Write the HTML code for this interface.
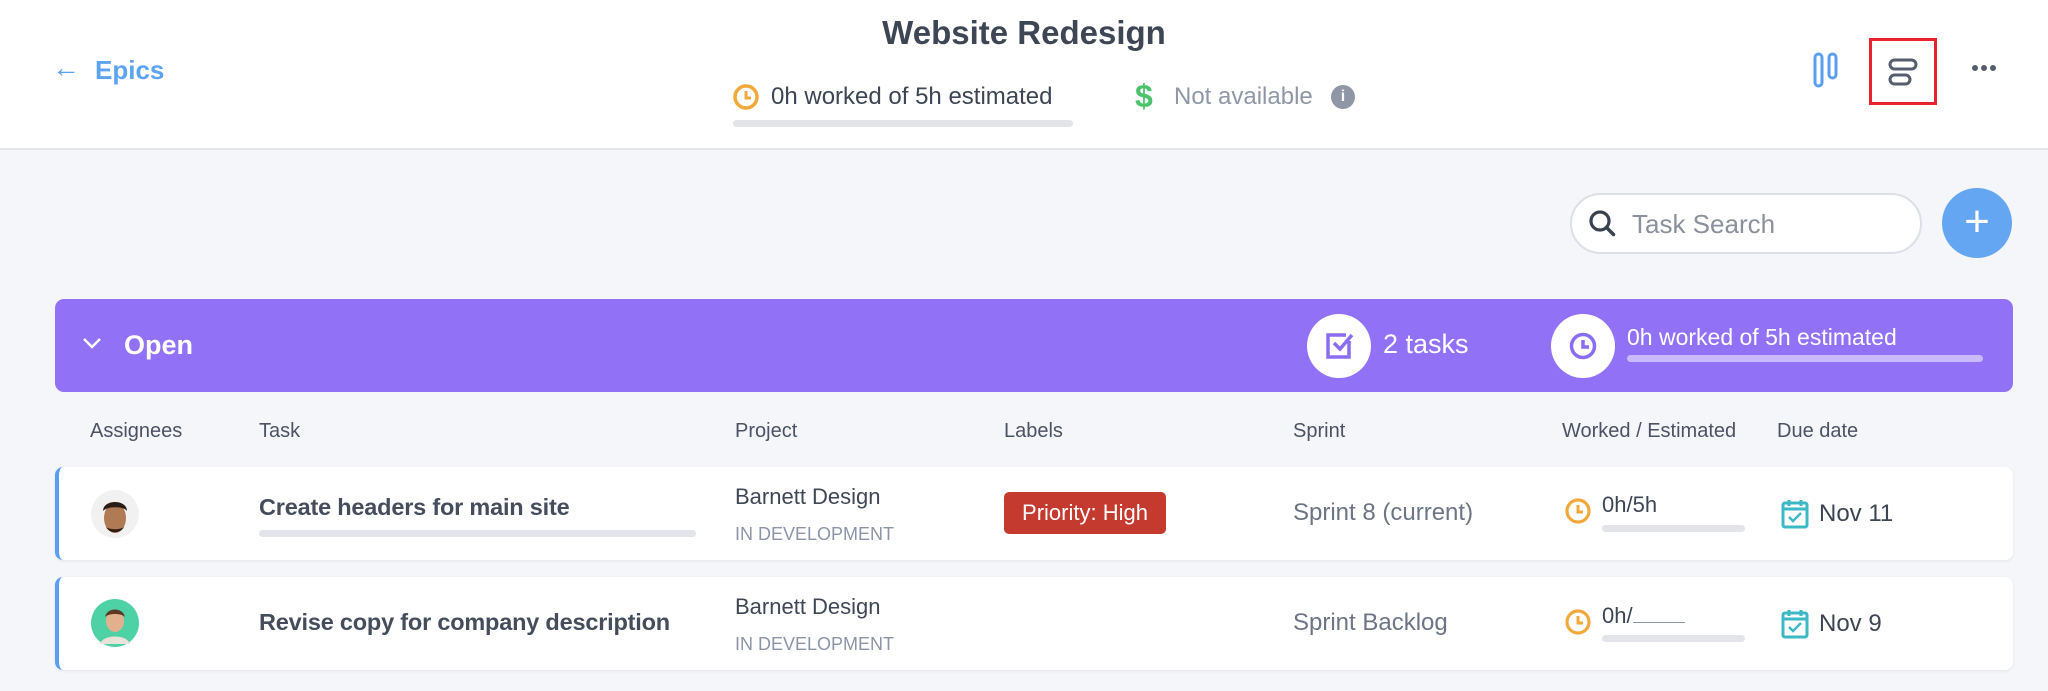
<!DOCTYPE html>
<html><head><meta charset="utf-8"><style>
*{box-sizing:border-box;margin:0;padding:0}
body{width:2048px;height:691px;background:#f5f6fa;font-family:"Liberation Sans",Arial,sans-serif;position:relative;overflow:hidden;color:#3d4555}
.a{position:absolute;white-space:nowrap}
.hdr{position:absolute;left:0;top:0;width:2048px;height:150px;background:#fff;border-bottom:2px solid #e4e6eb}
.bar{position:absolute;height:7px;border-radius:4px;background:#e2e4e9}
.row{position:absolute;left:55px;width:1958px;height:93px;background:#fff;border-radius:8px;border-left:4px solid #5a9ef0;box-shadow:0 1px 3px rgba(0,0,0,.08)}
.th{position:absolute;top:420px;font-size:20px;color:#4b5263}
.task{font-size:23.5px;font-weight:bold;color:#454c5c;letter-spacing:-0.2px}
.proj{font-size:22px;color:#3f4656}
.dev{font-size:18px;color:#8c95a7}
.gray{font-size:24px;color:#6d7485}
</style></head><body>
<div class="hdr"></div>
<div class="a" style="left:52px;top:52px;font-size:28px;color:#5ca4f2">←</div>
<div class="a" style="left:95px;top:55px;font-size:26px;color:#5ca4f2;font-weight:bold">Epics</div>
<div class="a" style="left:0;width:2048px;text-align:center;top:14px;font-size:33px;font-weight:bold;color:#3e4656">Website Redesign</div>
<svg class="a" style="left:732px;top:83px" width="28" height="28" viewBox="0 0 28 28"><circle cx="14" cy="14" r="11" fill="none" stroke="#f2a93b" stroke-width="3.5"/><path d="M14 8v7h5" fill="none" stroke="#f2a93b" stroke-width="3"/></svg>
<div class="a" style="left:771px;top:83px;font-size:24px;color:#3d4555">0h worked of 5h estimated</div>
<div class="bar" style="left:733px;top:120px;width:340px"></div>
<div class="a" style="left:1135px;top:78px;font-size:32px;font-weight:bold;color:#4cc36b">$</div>
<div class="a" style="left:1174px;top:83px;font-size:24px;color:#8f97a7">Not available</div>
<div class="a" style="left:1331px;top:85px;width:24px;height:24px;border-radius:50%;background:#8f97a7;color:#fff;font-size:16px;font-weight:bold;text-align:center;line-height:24px">i</div>
<svg class="a" style="left:1810px;top:50px" width="32" height="40" viewBox="0 0 32 40"><rect x="5" y="4" width="7" height="32" rx="3.5" fill="none" stroke="#5a9ef0" stroke-width="3"/><rect x="19" y="4" width="7" height="24" rx="3.5" fill="none" stroke="#5a9ef0" stroke-width="3"/></svg>
<div class="a" style="left:1869px;top:38px;width:68px;height:67px;border:3px solid #e8232f"></div>
<svg class="a" style="left:1885px;top:55px" width="36" height="36" viewBox="0 0 36 36"><rect x="5" y="5" width="26" height="9" rx="4.5" fill="none" stroke="#555d6e" stroke-width="3"/><rect x="5" y="20" width="20" height="9" rx="4.5" fill="none" stroke="#555d6e" stroke-width="3"/></svg>
<svg class="a" style="left:1970px;top:62px" width="28" height="12" viewBox="0 0 28 12"><circle cx="5" cy="6" r="3" fill="#555d6e"/><circle cx="14" cy="6" r="3" fill="#555d6e"/><circle cx="23" cy="6" r="3" fill="#555d6e"/></svg>
<div class="a" style="left:1570px;top:193px;width:352px;height:61px;border-radius:31px;background:#fff;border:2px solid #dcdfe5"></div>
<svg class="a" style="left:1587px;top:208px" width="32" height="32" viewBox="0 0 32 32"><circle cx="13" cy="13" r="9" fill="none" stroke="#3a4150" stroke-width="3.2"/><path d="M19.5 19.5l7 7" stroke="#3a4150" stroke-width="3.5" stroke-linecap="round"/></svg>
<div class="a" style="left:1632px;top:209px;font-size:26px;color:#8a909c">Task Search</div>
<div class="a" style="left:1942px;top:188px;width:70px;height:70px;border-radius:50%;background:#65a6f3;color:#fff;font-size:44px;text-align:center;line-height:68px">+</div>
<div class="a" style="left:55px;top:299px;width:1958px;height:93px;background:#9172f6;border-radius:9px"></div>
<svg class="a" style="left:80px;top:333px" width="24" height="20" viewBox="0 0 24 20"><path d="M4 6l8 8 8-8" fill="none" stroke="#fff" stroke-width="2.5"/></svg>
<div class="a" style="left:124px;top:330px;font-size:27px;font-weight:bold;color:#fff">Open</div>
<div class="a" style="left:1307px;top:314px;width:64px;height:64px;border-radius:50%;background:#fff"></div>
<svg class="a" style="left:1322px;top:327px" width="36" height="36" viewBox="0 0 36 36"><path d="M27 14v16H6V8h18" fill="none" stroke="#8a6df2" stroke-width="3.5"/><path d="M12 16l6 6 12-14" fill="none" stroke="#8a6df2" stroke-width="3.5"/></svg>
<div class="a" style="left:1383px;top:329px;font-size:27px;color:#fff">2 tasks</div>
<div class="a" style="left:1551px;top:314px;width:64px;height:64px;border-radius:50%;background:#fff"></div>
<svg class="a" style="left:1568px;top:331px" width="30" height="30" viewBox="0 0 30 30"><circle cx="15" cy="15" r="11.5" fill="none" stroke="#8a6df2" stroke-width="3.5"/><path d="M15 9v7h6" fill="none" stroke="#8a6df2" stroke-width="3.5"/></svg>
<div class="a" style="left:1627px;top:324px;font-size:23px;color:#fff">0h worked of 5h estimated</div>
<div class="bar" style="left:1627px;top:355px;width:356px;background:#c9bafa"></div>
<div class="th" style="left:90px">Assignees</div>
<div class="th" style="left:259px">Task</div>
<div class="th" style="left:735px">Project</div>
<div class="th" style="left:1004px">Labels</div>
<div class="th" style="left:1293px">Sprint</div>
<div class="th" style="left:1562px">Worked / Estimated</div>
<div class="th" style="left:1777px">Due date</div>

<div class="row" style="top:467px"></div>
<div class="row" style="top:577px"></div>

<svg class="a" style="left:90px;top:489px" width="50" height="50" viewBox="0 0 50 50"><circle cx="25" cy="25" r="24" fill="#f1f1f1"/><ellipse cx="25" cy="29" rx="11" ry="15" fill="#b07a55"/><path d="M13 22c0-12 24-12 24 0c-3-5-20-5-24 0z" fill="#2a1d16"/><path d="M16 38c4 7 14 7 18 0c-4 3-14 3-18 0z" fill="#2a1d16"/></svg>
<svg class="a" style="left:90px;top:598px" width="50" height="50" viewBox="0 0 50 50"><circle cx="25" cy="25" r="24" fill="#4fd1a6"/><ellipse cx="25" cy="23" rx="9" ry="11" fill="#e3b08f"/><path d="M15 19c2-10 18-10 20 0c-4-4-16-4-20 0z" fill="#5a3a26"/><path d="M10 46c3-10 27-10 30 0z" fill="#e8e2d8"/></svg>

<div class="a task" style="left:259px;top:494px">Create headers for main site</div>
<div class="bar" style="left:259px;top:530px;width:437px"></div>
<div class="a task" style="left:259px;top:609px">Revise copy for company description</div>

<div class="a proj" style="left:735px;top:484px">Barnett Design</div>
<div class="a dev" style="left:735px;top:524px">IN DEVELOPMENT</div>
<div class="a proj" style="left:735px;top:594px">Barnett Design</div>
<div class="a dev" style="left:735px;top:634px">IN DEVELOPMENT</div>

<div class="a" style="left:1004px;top:492px;width:162px;height:42px;background:#c53a2f;border-radius:5px;color:#fff;font-size:22px;text-align:center;line-height:42px">Priority: High</div>

<div class="a gray" style="left:1293px;top:499px">Sprint 8 (current)</div>
<div class="a gray" style="left:1293px;top:609px">Sprint Backlog</div>

<svg class="a" style="left:1564px;top:497px" width="28" height="28" viewBox="0 0 28 28"><circle cx="14" cy="14" r="11" fill="none" stroke="#f2a93b" stroke-width="3.2"/><path d="M14 8v7h5" fill="none" stroke="#f2a93b" stroke-width="3"/></svg>
<div class="a" style="left:1602px;top:492px;font-size:22px;color:#3d4555">0h/5h</div>
<div class="bar" style="left:1602px;top:525px;width:143px"></div>
<svg class="a" style="left:1564px;top:608px" width="28" height="28" viewBox="0 0 28 28"><circle cx="14" cy="14" r="11" fill="none" stroke="#f2a93b" stroke-width="3.2"/><path d="M14 8v7h5" fill="none" stroke="#f2a93b" stroke-width="3"/></svg>
<div class="a" style="left:1602px;top:603px;font-size:22px;color:#3d4555">0h/<span style="display:inline-block;width:52px;border-bottom:1px solid #8c95a7"></span></div>
<div class="bar" style="left:1602px;top:635px;width:143px"></div>

<svg class="a" style="left:1780px;top:498px" width="30" height="32" viewBox="0 0 30 32"><rect x="3" y="5" width="24" height="24" rx="2" fill="none" stroke="#3cb8c6" stroke-width="3"/><path d="M3 11h24M9 2v6M21 2v6" stroke="#3cb8c6" stroke-width="3"/><path d="M9 19l4 4 8-8" fill="none" stroke="#3cb8c6" stroke-width="2.5"/></svg>
<div class="a" style="left:1819px;top:500px;font-size:24px;color:#3d4555">Nov 11</div>
<svg class="a" style="left:1780px;top:608px" width="30" height="32" viewBox="0 0 30 32"><rect x="3" y="5" width="24" height="24" rx="2" fill="none" stroke="#3cb8c6" stroke-width="3"/><path d="M3 11h24M9 2v6M21 2v6" stroke="#3cb8c6" stroke-width="3"/><path d="M9 19l4 4 8-8" fill="none" stroke="#3cb8c6" stroke-width="2.5"/></svg>
<div class="a" style="left:1819px;top:610px;font-size:24px;color:#3d4555">Nov 9</div>
</body></html>
